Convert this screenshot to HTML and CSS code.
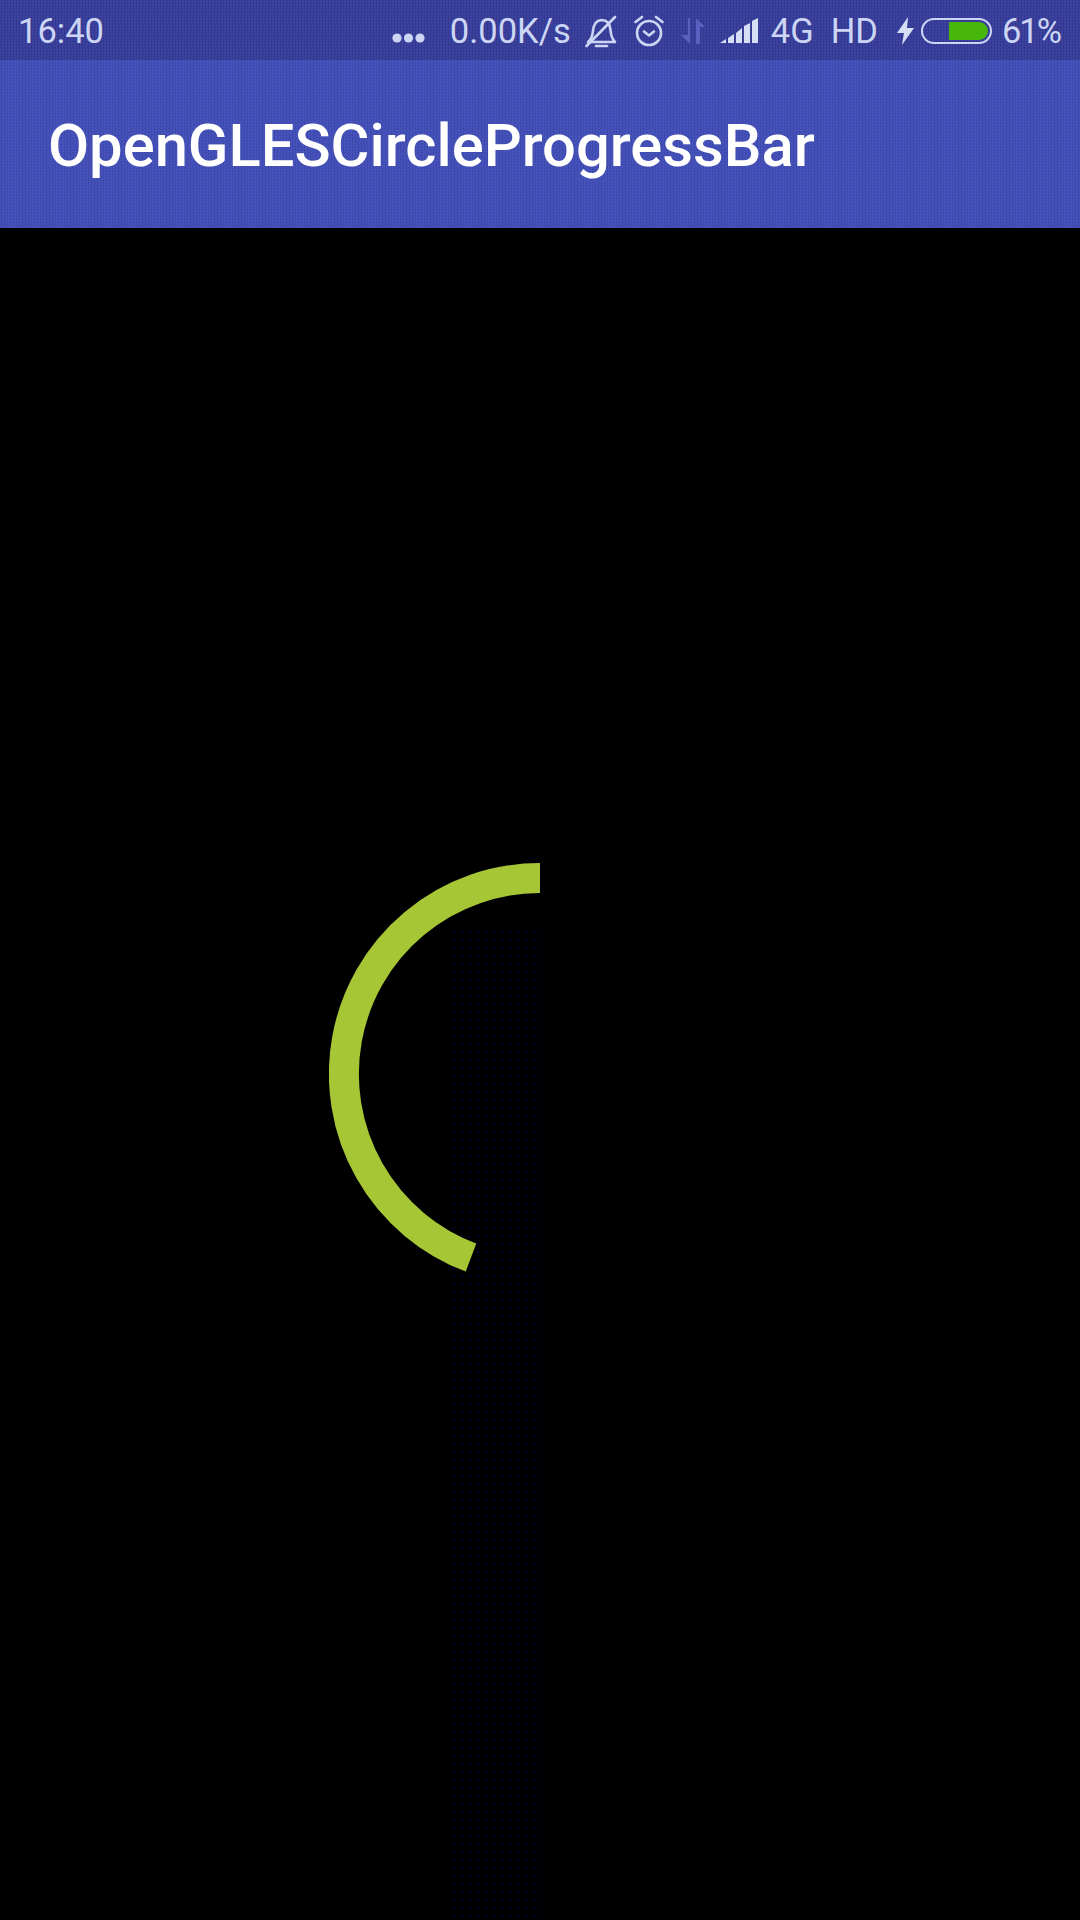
FILE: index.html
```html
<!DOCTYPE html>
<html lang="en">
<head>
<meta charset="utf-8">
<title>OpenGLESCircleProgressBar</title>
<link rel="stylesheet" href="styles.css">
</head>
<body>
<div class="screen">
  <header class="status">
    <span class="time">16:40</span>
    <div class="indicators">
      <svg class="more" width="33" height="10" viewBox="0 0 33 10"><circle cx="5" cy="5" r="4.6"/><circle cx="16.500" cy="5" r="4.6"/><circle cx="28" cy="5" r="4.6"/></svg>
      <span class="speed">0.00K/s</span>
      <svg class="ic bell" width="33" height="33" viewBox="0 0 33 33">
        <path d="M3 27c3-2 4.500-6 5-11C8.500 9 11 5.500 16.500 5c5.500 0 8.500 4 9 10 .4 5 1.500 9 4.500 12z"/>
        <path d="M11 31h11"/>
        <path d="M1.500 31L30 2"/>
      </svg>
      <svg class="ic alarm" width="32" height="32" viewBox="0 0 32 32">
        <circle cx="16" cy="18" r="12"/>
        <path d="M2.500 7l6.500-5M29.500 7L23 2"/>
        <path d="M11 16.500l5 4 5-4"/>
      </svg>
      <svg class="ic arrows" width="28" height="28" viewBox="0 0 28 28">
        <path class="dim" d="M9 1v17H2l9 9V1zM17 27V1l9 9h-5v17z"/>
      </svg>
      <svg class="signal" width="38" height="26" viewBox="0 0 38 26">
        <path d="M0 25l6-4v4zM8 20l6-4v9H8zM16 15l6-5v15h-6zM24 8l6-3v20h-6zM32 3l6-3v25h-6z"/>
      </svg>
      <span class="net">4G</span>
      <span class="net hd">HD</span>
      <svg class="bolt" width="17" height="28" viewBox="0 0 17 28"><path d="M11 0L0 16h7l-2 12L17 11h-7z"/></svg>
      <div class="battery"><div class="charge"></div></div>
      <span class="pct">61%</span>
    </div>
  </header>
  <div class="appbar"><h1 class="title">OpenGLESCircleProgressBar</h1></div>
  <main class="stage">
    <div class="banding"></div>
    <svg class="ring" width="422" height="422" viewBox="0 0 422 422">
      <path d="M211 15A196 196 0 0 0 142 394.500"/>
    </svg>
  </main>
</div>
</body>
</html>
```
FILE: styles.css
```css
* { box-sizing: border-box; }
html, body { margin: 0; padding: 0; background: #000; }
.screen {
  width: 1080px;
  height: 1920px;
  display: flex;
  flex-direction: column;
  font-family: Roboto, "Liberation Sans", sans-serif;
}
.status {
  height: 60px;
  display: flex;
  align-items: center;
  justify-content: space-between;
  padding: 2px 20px 0 18px;
  background-color: #383f9f;
  background-image: repeating-conic-gradient(rgba(0,0,0,.09) 0 25%, rgba(255,255,255,.03) 0 50%);
  background-size: 3px 3px;
  color: #ccd6f4;
  font-size: 34.5px;
  font-weight: 400;
}
.indicators { display: flex; align-items: center; }
.more { fill: #ccd6f4; margin-top: 13px; }
.speed { margin-left: 25px; }
.ic { fill: none; stroke: #ccd6f4; stroke-width: 2.6; stroke-linecap: round; stroke-linejoin: round; }
.bell { margin-left: 14px; }
.alarm { margin-left: 15px; }
.arrows { margin-left: 14px; stroke: none; }
.dim { fill: #5a60c0; }
.signal { margin-left: 13px; fill: #d6dff5; }
.net { margin-left: 13px; }
.hd { margin-left: 17px; }
.bolt { margin-left: 19px; fill: #d6dff5; }
.battery {
  margin-left: 7px;
  width: 71px;
  height: 26px;
  border: 2px solid #ccd6f4;
  border-radius: 13px;
  padding: 2px;
  display: flex;
  justify-content: flex-end;
}
.charge {
  width: 39px;
  background: #47b80a;
  border-radius: 0 10px 10px 0;
}
.pct { margin-left: 10px; letter-spacing: -2px; }
.appbar {
  height: 168px;
  display: flex;
  align-items: center;
  padding: 4px 0 0 48px;
  background-color: #4350bc;
  background-image: repeating-conic-gradient(rgba(0,0,0,.08) 0 25%, rgba(255,255,255,.03) 0 50%);
  background-size: 3px 3px;
}
.title {
  margin: 0;
  color: #fff;
  font-size: 59.7px;
  font-weight: 500;
  white-space: nowrap;
}
.stage {
  flex: 1;
  position: relative;
  display: flex;
  align-items: center;
  justify-content: center;
  background: #000;
}
.banding {
  position: absolute;
  left: 450px;
  width: 92px;
  top: 700px;
  bottom: 0;
  background-image: radial-gradient(circle, #00003c 0.8px, transparent 1.1px);
  background-size: 8px 8px;
}
.ring { position: relative; fill: none; stroke: #a6c636; stroke-width: 30; }
```
